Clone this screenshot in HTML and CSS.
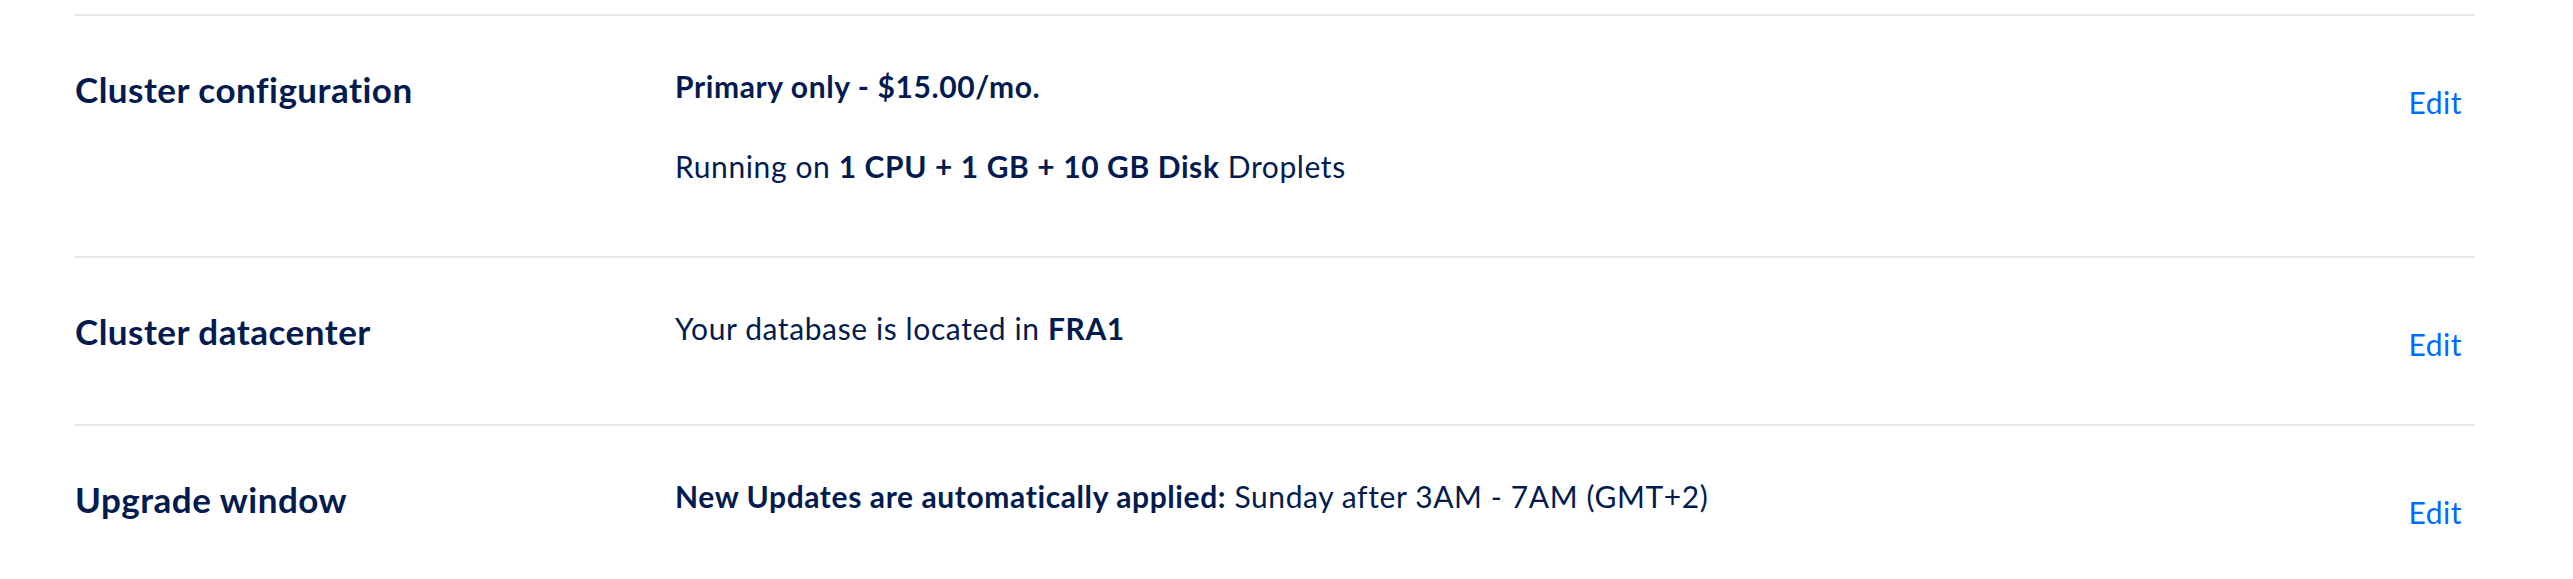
FILE: index.html
```html
<!DOCTYPE html>
<html lang="en">
<head>
    <meta charset="UTF-8">
    <meta name="viewport" content="width=device-width, initial-scale=1.0">
    <title>Database settings</title>
    <link rel="stylesheet" href="styles.css">
</head>
<body>

<!-- settings list -->
<div class="settings">
    <div class="setting-row">
        <div class="setting-label">Cluster configuration</div>
        <div class="setting-value">
            <p class="strong">Primary only - $15.00/mo.</p>
            <p>Running on <b>1 CPU + 1 GB + 10 GB Disk</b> Droplets</p>
        </div>
        <a class="edit-link" href="#">Edit</a>
    </div>

    <div class="setting-row">
        <div class="setting-label">Cluster datacenter</div>
        <div class="setting-value">
            <p>Your database is located in <b>FRA1</b></p>
        </div>
        <a class="edit-link" href="#">Edit</a>
    </div>

    <div class="setting-row">
        <div class="setting-label">Upgrade window</div>
        <div class="setting-value">
            <p><b>New Updates are automatically applied:</b> Sunday after 3AM - 7AM (GMT+2)</p>
        </div>
        <a class="edit-link" href="#">Edit</a>
    </div>
</div>

</body>
</html>
```

FILE: styles.css
```css
body {
    font-family: Lato, 'Liberation Sans', sans-serif;
    margin: 0;
    padding: 0;
    background-color: #ffffff;
    color: #031b4e;
}

.settings {
    width: 2400px;
    margin: 14px 0 0 75px;
}

.setting-row {
    display: grid;
    grid-template-columns: 600px 1fr auto;
    align-items: start;
    border-top: 2px solid #e5e8ed;
    padding: 50px 0 70px;
}

.setting-label {
    font-size: 35px;
    line-height: 46px;
    letter-spacing: 0.5px;
    font-weight: bold;
}

.setting-value p {
    margin: 0 0 40px;
    font-size: 30px;
    line-height: 40px;
    letter-spacing: 0.6px;
}

.setting-value p:last-child {
    margin-bottom: 0;
}

.setting-value .strong,
.setting-value b {
    font-weight: bold;
}

.edit-link {
    display: block;
    margin: 21px 0 -10px;
    padding: 0 13px 0 12px;
    font-size: 30px;
    line-height: 30px;
    letter-spacing: 0.5px;
    color: #0069ff;
    text-decoration: none;
}
```
